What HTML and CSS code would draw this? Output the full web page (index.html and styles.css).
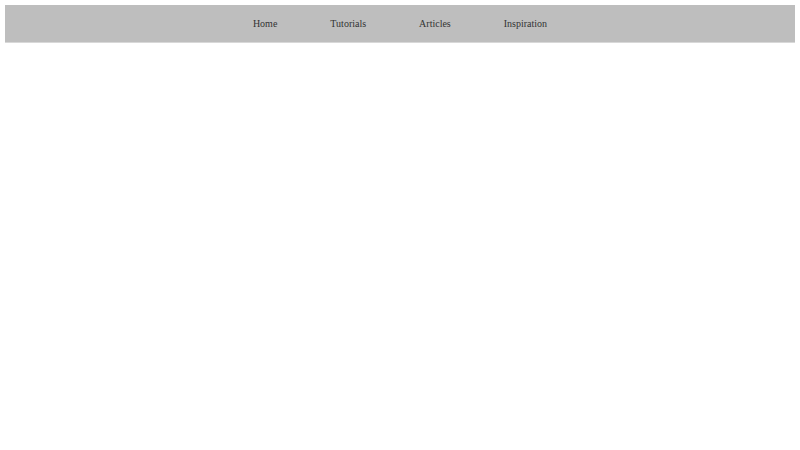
FILE: index.html
```html
<!DOCTYPE html>
<html lang="en">

<head>
    <meta charset="utf-8">
    <title>Navigation</title>
    <link rel="stylesheet" href="styles.css">
</head>

<body>
    <nav>
        <ul class="nav">
            <li><a href="#">Home</a></li>
            <li><a href="#">Tutorials</a></li>
            <li><a href="#">Articles</a></li>
            <li><a href="#">Inspiration</a></li>
        </ul>
    </nav>
</body>

</html>
```
FILE: styles.css
```css
body {
    margin: 5px;
    background-color: #fff;
    font-family: "Liberation Serif", serif;
    font-size: 10px;
}

.nav {
    display: flex;
    justify-content: center;
    gap: 53px;
    margin: 0;
    padding: 0;
    list-style: none;
    background-color: #bebebe;
    border-bottom: 1px solid #d8d8d8;
}

.nav a {
    display: block;
    padding: 13px 0;
    line-height: 11px;
    color: #333;
    text-decoration: none;
}
```
